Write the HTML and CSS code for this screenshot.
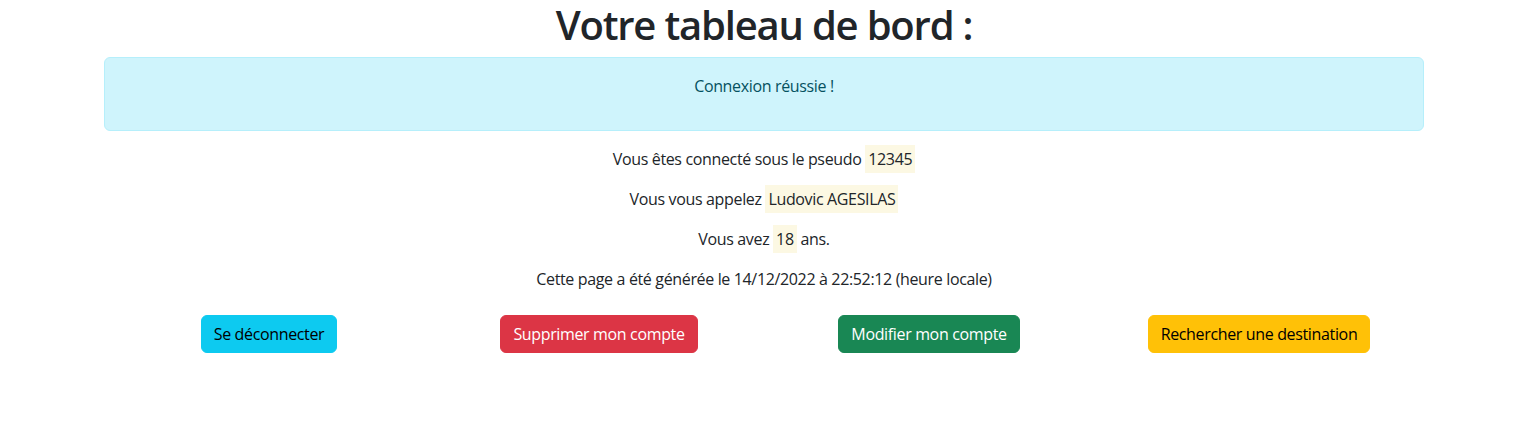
FILE: index.html
```html
<!DOCTYPE html>
<html lang="fr">
<head>
<meta charset="utf-8">
<title>Tableau de bord</title>
<link rel="stylesheet" href="styles.css">
</head>
<body>
<main class="container">
  <h1 class="title">Votre tableau de bord :</h1>
  <div class="alert">
    <p>Connexion réussie !</p>
  </div>
  <p>Vous êtes connecté sous le pseudo <mark>12345</mark></p>
  <p>Vous vous appelez <mark>Ludovic AGESILAS</mark></p>
  <p>Vous avez <mark>18</mark> ans.</p>
  <p>Cette page a été générée le 14/12/2022 à 22:52:12 (heure locale)</p>
  <div class="actions">
    <div class="col"><a class="btn btn-info" href="#">Se déconnecter</a></div>
    <div class="col"><a class="btn btn-danger" href="#">Supprimer mon compte</a></div>
    <div class="col"><a class="btn btn-success" href="#">Modifier mon compte</a></div>
    <div class="col"><a class="btn btn-warning" href="#">Rechercher une destination</a></div>
  </div>
</main>
</body>
</html>
```
FILE: styles.css
```css
* { box-sizing: border-box; }
body {
  margin: 0;
  font-family: "Open Sans", "Noto Sans", sans-serif;
  font-size: 16px;
  line-height: 1.5;
  letter-spacing: -0.35px;
  color: #212529;
  background: #fff;
}
.container {
  width: 1320px;
  margin: 0 auto;
  text-align: center;
}
.title {
  margin: 0 0 8px;
  font-size: 40px;
  font-weight: 600;
  line-height: 1.2;
  letter-spacing: -1.2px;
  padding-top: 1px;
}
p { margin: 0 0 16px; }
.alert {
  padding: 16px;
  margin-bottom: 16px;
  color: #055160;
  background: #cff4fc;
  border: 1px solid #b6effb;
  border-radius: 6px;
}
mark {
  padding: 0.1875em;
  background: #fcf8e3;
  color: #212529;
}
.actions {
  display: grid;
  grid-template-columns: repeat(4, 1fr);
  padding-top: 8px;
}
.col { display: flex; justify-content: center; }
.btn {
  display: inline-block;
  padding: 6px 12px;
  font-size: 16px;
  line-height: 1.5;
  border: 1px solid transparent;
  border-radius: 6px;
  text-decoration: none;
}
.btn-info { background: #0dcaf0; border-color: #0dcaf0; color: #000; }
.btn-danger { background: #dc3545; border-color: #dc3545; color: #fff; }
.btn-success { background: #198754; border-color: #198754; color: #fff; }
.btn-warning { background: #ffc107; border-color: #ffc107; color: #000; }
```
